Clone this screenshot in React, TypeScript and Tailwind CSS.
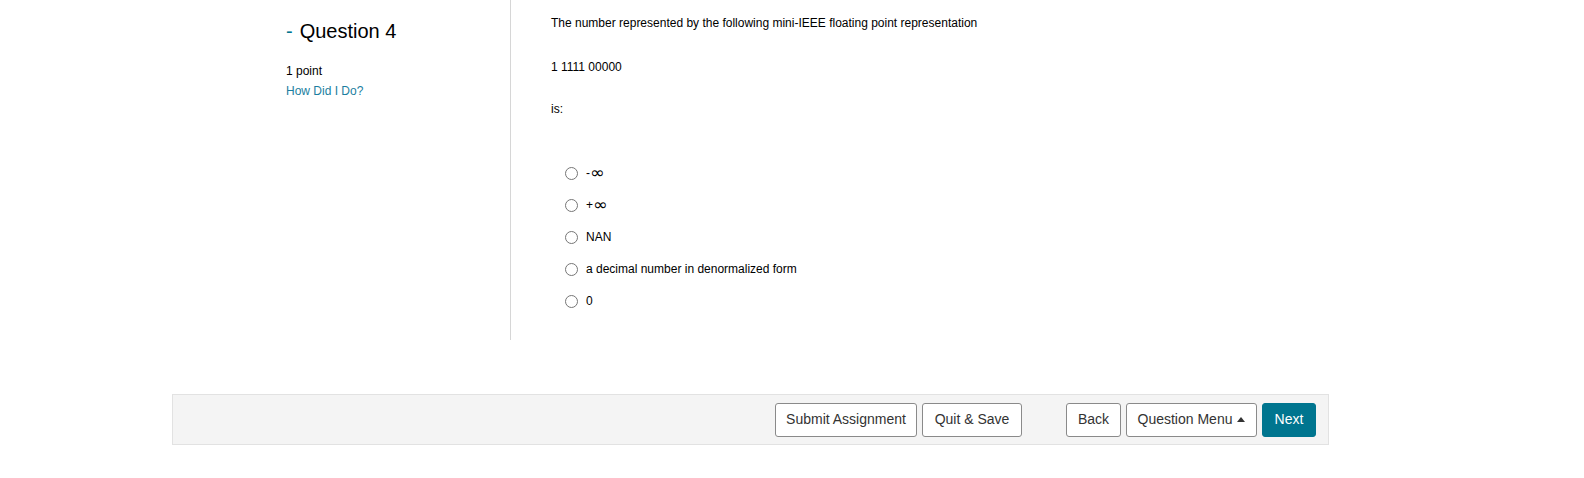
import { useState } from "react";

const options = [
  { pre: "-", inf: true },
  { pre: "+", inf: true },
  { pre: "NAN", inf: false },
  { pre: "a decimal number in denormalized form", inf: false },
  { pre: "0", inf: false },
];

const btn =
  "h-[34px] shrink-0 whitespace-nowrap bg-white border border-[#8a8a8a] rounded-[3px] flex items-center justify-center";

export default function App() {
  const [picked, setPicked] = useState<number | null>(null);

  return (
    <main className="w-[1584px] h-[478px] bg-white text-black font-['Liberation_Sans',Arial,sans-serif]">
      {/* Question area */}
      <div className="flex pl-[286px]">
        <div className="w-[225px] h-[340px] shrink-0 border-r border-[#d6d6d6]">
          <h2 className="text-[20px] leading-none pt-[21px] flex items-center gap-[7px]">
            <span className="text-[#00758f]">-</span>
            <span>Question 4</span>
          </h2>
          <p className="text-[12px] mt-[23px] leading-[14px]">1 point</p>
          <a href="#" className="text-[12px] text-[#1b7ea0] leading-[14px] block mt-[6px]">
            How Did I Do?
          </a>
        </div>

        <div className="pl-[40px] pt-[16px] text-[12px] leading-[14px]">
          <p>The number represented by the following mini-IEEE floating point representation</p>
          <p className="mt-[30px]">1 1111 00000</p>
          <p className="mt-[28px]">is:</p>

          <div className="mt-[50px] pl-[14px] flex flex-col gap-[18px]">
            {options.map((o, i) => (
              <label key={o.pre + i} className="flex items-center gap-[8px] cursor-pointer h-[14px]">
                <span
                  onClick={() => setPicked(i)}
                  className="w-[13px] h-[13px] rounded-full border border-[#767676] bg-white flex items-center justify-center"
                >
                  {picked === i && <span className="w-[7px] h-[7px] rounded-full bg-[#00758f]" />}
                </span>
                <span className="flex items-center">
                  {o.pre}
                  {o.inf && (
                    <span className="font-['DejaVu_Sans',sans-serif] text-[16px] leading-[14px] scale-x-110 origin-left">
                      {"\u221E"}
                    </span>
                  )}
                </span>
              </label>
            ))}
          </div>
        </div>
      </div>

      {/* Footer bar */}
      <div className="ml-[172px] mt-[54px] w-[1157px] h-[51px] bg-[#f4f4f4] border border-[#e2e2e2] flex items-center pl-[602px] text-[14px] text-[#333]">
        <button className={`${btn} w-[142px]`}>Submit Assignment</button>
        <button className={`${btn} w-[100px] ml-[5px]`}>Quit &amp; Save</button>
        <button className={`${btn} w-[55px] ml-[44px]`}>Back</button>
        <button className={`${btn} w-[131px] ml-[5px] gap-[5px]`}>
          Question Menu
          <svg width="8" height="5" viewBox="0 0 8 5"><path d="M0 5 L4 0 L8 5 Z" fill="#333" /></svg>
        </button>
        <button className="h-[34px] w-[54px] shrink-0 ml-[5px] bg-[#00758f] text-white border border-[#00758f] rounded-[3px]">
          Next
        </button>
      </div>
    </main>
  );
}
